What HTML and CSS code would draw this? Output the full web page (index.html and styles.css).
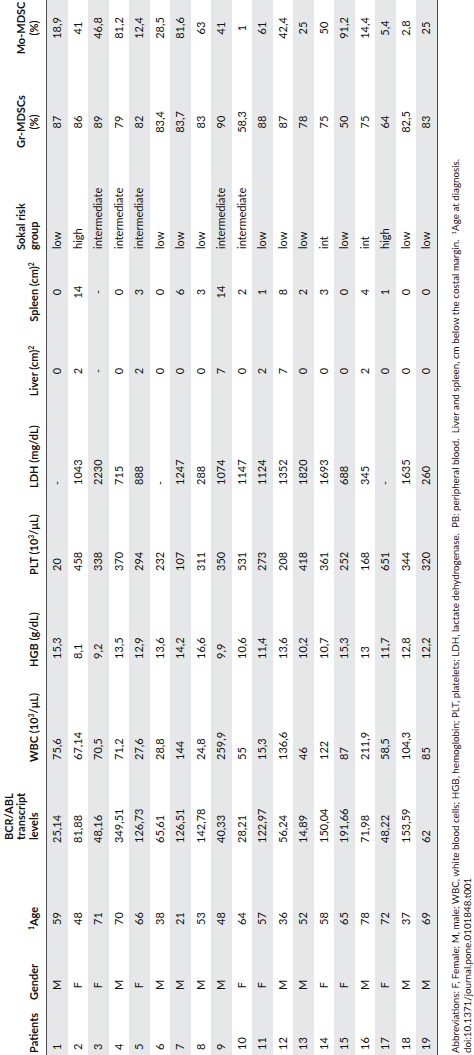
FILE: index.html
```html
<!DOCTYPE html>
<html lang="en">
<head>
<meta charset="utf-8">
<title>Patient characteristics</title>
<link rel="stylesheet" href="styles.css">
</head>
<body>
<div class="page">
  <div class="sheet">
    <table class="data">
      <colgroup>
        <col class="w1"><col class="w2"><col class="w3"><col class="w4"><col class="w5"><col class="w6"><col class="w7"><col class="w8"><col class="w9"><col class="w10"><col class="w11"><col class="w12"><col class="w13">
      </colgroup>
      <thead>
        <tr>
          <th class="k1">Patients</th>
          <th class="k2">Gender</th>
          <th class="k3"><sup>1</sup>Age</th>
          <th class="k4">BCR/ABL<br>transcript<br>levels</th>
          <th class="k5">WBC (10<sup>3</sup>/μL)</th>
          <th class="k6">HGB (g/dL)</th>
          <th class="k7">PLT (10<sup>3</sup>/μL)</th>
          <th class="k8">LDH (mg/dL)</th>
          <th class="k9">Liver (cm)<sup>2</sup></th>
          <th class="k10">Spleen (cm)<sup>2</sup></th>
          <th class="k11">Sokal risk<br>group</th>
          <th class="k12">Gr-MDSCs<br>(%)</th>
          <th class="k13">Mo-MDSC<br>(%)</th>
        </tr>
      </thead>
      <tbody>
        <tr><td class="k1">1</td><td class="k2">M</td><td class="k3">59</td><td class="k4">25,14</td><td class="k5">75,6</td><td class="k6">15,3</td><td class="k7">20</td><td class="k8">-</td><td class="k9">0</td><td class="k10">0</td><td class="k11">low</td><td class="k12">87</td><td class="k13">18,9</td></tr>
        <tr><td class="k1">2</td><td class="k2">F</td><td class="k3">48</td><td class="k4">81,88</td><td class="k5">67,14</td><td class="k6">8,1</td><td class="k7">458</td><td class="k8">1043</td><td class="k9">2</td><td class="k10">14</td><td class="k11">high</td><td class="k12">86</td><td class="k13">41</td></tr>
        <tr><td class="k1">3</td><td class="k2">F</td><td class="k3">71</td><td class="k4">48,16</td><td class="k5">70,5</td><td class="k6">9,2</td><td class="k7">338</td><td class="k8">2230</td><td class="k9">-</td><td class="k10">-</td><td class="k11">intermediate</td><td class="k12">89</td><td class="k13">46,8</td></tr>
        <tr><td class="k1">4</td><td class="k2">M</td><td class="k3">70</td><td class="k4">349,51</td><td class="k5">71,2</td><td class="k6">13,5</td><td class="k7">370</td><td class="k8">715</td><td class="k9">0</td><td class="k10">0</td><td class="k11">intermediate</td><td class="k12">79</td><td class="k13">81,2</td></tr>
        <tr><td class="k1">5</td><td class="k2">F</td><td class="k3">66</td><td class="k4">126,73</td><td class="k5">27,6</td><td class="k6">12,9</td><td class="k7">294</td><td class="k8">888</td><td class="k9">2</td><td class="k10">3</td><td class="k11">intermediate</td><td class="k12">82</td><td class="k13">12,4</td></tr>
        <tr><td class="k1">6</td><td class="k2">M</td><td class="k3">38</td><td class="k4">65,61</td><td class="k5">28,8</td><td class="k6">13,6</td><td class="k7">232</td><td class="k8">-</td><td class="k9">0</td><td class="k10">0</td><td class="k11">low</td><td class="k12">83,4</td><td class="k13">28,5</td></tr>
        <tr><td class="k1">7</td><td class="k2">M</td><td class="k3">21</td><td class="k4">126,51</td><td class="k5">144</td><td class="k6">14,2</td><td class="k7">107</td><td class="k8">1247</td><td class="k9">0</td><td class="k10">6</td><td class="k11">low</td><td class="k12">83,7</td><td class="k13">81,6</td></tr>
        <tr><td class="k1">8</td><td class="k2">M</td><td class="k3">53</td><td class="k4">142,78</td><td class="k5">24,8</td><td class="k6">16,6</td><td class="k7">311</td><td class="k8">288</td><td class="k9">0</td><td class="k10">3</td><td class="k11">low</td><td class="k12">83</td><td class="k13">63</td></tr>
        <tr><td class="k1">9</td><td class="k2">M</td><td class="k3">48</td><td class="k4">40,33</td><td class="k5">259,9</td><td class="k6">9,9</td><td class="k7">350</td><td class="k8">1074</td><td class="k9">7</td><td class="k10">14</td><td class="k11">intermediate</td><td class="k12">90</td><td class="k13">41</td></tr>
        <tr><td class="k1">10</td><td class="k2">F</td><td class="k3">64</td><td class="k4">28,21</td><td class="k5">55</td><td class="k6">10,6</td><td class="k7">531</td><td class="k8">1147</td><td class="k9">0</td><td class="k10">2</td><td class="k11">intermediate</td><td class="k12">58,3</td><td class="k13">1</td></tr>
        <tr><td class="k1">11</td><td class="k2">F</td><td class="k3">57</td><td class="k4">122,97</td><td class="k5">15,3</td><td class="k6">11,4</td><td class="k7">273</td><td class="k8">1124</td><td class="k9">2</td><td class="k10">1</td><td class="k11">low</td><td class="k12">88</td><td class="k13">61</td></tr>
        <tr><td class="k1">12</td><td class="k2">M</td><td class="k3">36</td><td class="k4">56,24</td><td class="k5">136,6</td><td class="k6">13,6</td><td class="k7">208</td><td class="k8">1352</td><td class="k9">7</td><td class="k10">8</td><td class="k11">low</td><td class="k12">87</td><td class="k13">42,4</td></tr>
        <tr><td class="k1">13</td><td class="k2">M</td><td class="k3">52</td><td class="k4">14,89</td><td class="k5">46</td><td class="k6">10,2</td><td class="k7">418</td><td class="k8">1820</td><td class="k9">0</td><td class="k10">2</td><td class="k11">low</td><td class="k12">78</td><td class="k13">25</td></tr>
        <tr><td class="k1">14</td><td class="k2">F</td><td class="k3">58</td><td class="k4">150,04</td><td class="k5">122</td><td class="k6">10,7</td><td class="k7">361</td><td class="k8">1693</td><td class="k9">0</td><td class="k10">3</td><td class="k11">int</td><td class="k12">75</td><td class="k13">50</td></tr>
        <tr><td class="k1">15</td><td class="k2">F</td><td class="k3">65</td><td class="k4">191,66</td><td class="k5">87</td><td class="k6">15,3</td><td class="k7">252</td><td class="k8">688</td><td class="k9">0</td><td class="k10">0</td><td class="k11">low</td><td class="k12">50</td><td class="k13">91,2</td></tr>
        <tr><td class="k1">16</td><td class="k2">M</td><td class="k3">78</td><td class="k4">71,98</td><td class="k5">211,9</td><td class="k6">13</td><td class="k7">168</td><td class="k8">345</td><td class="k9">2</td><td class="k10">4</td><td class="k11">int</td><td class="k12">75</td><td class="k13">14,4</td></tr>
        <tr><td class="k1">17</td><td class="k2">F</td><td class="k3">72</td><td class="k4">48,22</td><td class="k5">58,5</td><td class="k6">11,7</td><td class="k7">651</td><td class="k8">-</td><td class="k9">0</td><td class="k10">1</td><td class="k11">high</td><td class="k12">64</td><td class="k13">5,4</td></tr>
        <tr><td class="k1">18</td><td class="k2">M</td><td class="k3">37</td><td class="k4">153,59</td><td class="k5">104,3</td><td class="k6">12,8</td><td class="k7">344</td><td class="k8">1635</td><td class="k9">0</td><td class="k10">0</td><td class="k11">low</td><td class="k12">82,5</td><td class="k13">2,8</td></tr>
        <tr><td class="k1">19</td><td class="k2">M</td><td class="k3">69</td><td class="k4">62</td><td class="k5">85</td><td class="k6">12,2</td><td class="k7">320</td><td class="k8">260</td><td class="k9">0</td><td class="k10">0</td><td class="k11">low</td><td class="k12">83</td><td class="k13">25</td></tr>
      </tbody>
    </table>
    <div class="notes">
      <p class="note">Abbreviations: F, Female; M, male; WBC, white blood cells; HGB, hemoglobin; PLT, platelets; LDH, lactate dehydrogenase.  PB: peripheral blood.  Liver and spleen, cm below the costal margin.  <sup>1</sup>Age at diagnosis.</p>
      <p class="note">doi:10.1371/journal.pone.0101848.t001</p>
    </div>
  </div>
</div>
</body>
</html>
```

FILE: styles.css
```css
html, body {
  margin: 0;
  padding: 0;
  background: #ffffff;
  overflow: hidden;
}

.page {
  width: 474px;
  height: 1055px;
  overflow: hidden;
}

.sheet {
  width: 1120px;
  height: 474px;
  transform-origin: 0 0;
  transform: translateY(1055px) rotate(-90deg);
  font-family: Lato, "Open Sans", sans-serif;
  color: #111111;
}

.data {
  width: 1120px;
  table-layout: fixed;
  border-collapse: collapse;
  border-spacing: 0;
}

.w1 { width: 55px; }
.w2 { width: 70px; }
.w3 { width: 87px; }
.w4 { width: 81px; }
.w5 { width: 95px; }
.w6 { width: 92px; }
.w7 { width: 87px; }
.w8 { width: 88px; }
.w9 { width: 78px; }
.w10 { width: 72px; }
.w11 { width: 102px; }
.w12 { width: 91px; }
.w13 { width: 122px; }

.data th {
  height: 40px;
  padding: 0 0 6px 0;
  vertical-align: bottom;
  text-align: left;
  font-weight: 700;
  font-size: 11px;
  line-height: 12.5px;
  white-space: nowrap;
  border-bottom: 1.5px solid #4d4d4f;
}

.data td {
  height: 20.5px;
  padding: 0;
  vertical-align: middle;
  text-align: left;
  font-size: 11px;
  line-height: 12px;
  white-space: nowrap;
}

.data tbody tr:nth-child(odd) td {
  background: #e6e7e8;
}

.data tbody tr:last-child td {
  border-bottom: 1.5px solid #4d4d4f;
}

sup {
  font-size: 0.62em;
  line-height: 0;
  vertical-align: 0.55em;
}

/* left aligned columns */
th.k1 { padding-left: 2px; }
td.k1 { padding-left: 5px; }
th.k4 { padding-left: 3px; }
td.k5 { padding-left: 2px; }
td.k6 { padding-left: 8px; }
td.k7 { padding-left: 4px; }
td.k8 { padding-left: 3px; }
td.k11 { padding-left: 1px; }

/* centred columns */
.data th.k2, .data td.k2 { text-align: center; padding-right: 40px; }
.data th.k3, .data td.k3 { text-align: center; padding-right: 64px; }
.data th.k9, .data td.k9 { text-align: center; padding-right: 20px; }
.data th.k10, .data td.k10 { text-align: center; padding-right: 12px; }
.data th.k12, .data td.k12 { text-align: center; padding-right: 39px; }
.data th.k13, .data td.k13 { text-align: center; padding-right: 64px; }

.notes {
  padding: 11px 0 0 2px;
}

.note {
  margin: 0;
  font-size: 9.8px;
  line-height: 12px;
  white-space: pre;
}
```
